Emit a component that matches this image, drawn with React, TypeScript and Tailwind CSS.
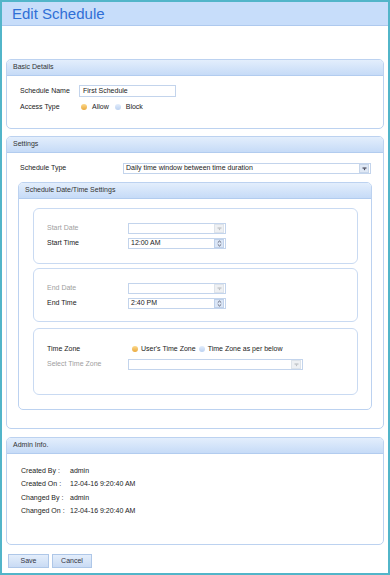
import React from "react";

const Panel = ({
  title,
  className = "",
  children,
}: {
  title: string;
  className?: string;
  children: React.ReactNode;
}) => (
  <div
    className={
      "rounded-[5px] border border-[#bcd2f0] bg-white overflow-hidden " +
      className
    }
  >
    <div className="h-[16px] flex items-center pl-[6px] bg-gradient-to-b from-[#e3eefc] to-[#c6dbf7] border-b border-[#b2ccef] text-[#333] text-[7px]">
      {title}
    </div>
    {children}
  </div>
);

const Arrow = ({ disabled = false }: { disabled?: boolean }) => (
  <div
    className={
      "w-[10px] h-[9px] mr-[1px] flex items-center justify-center border " +
      (disabled
        ? "bg-[#eef0f3] border-[#dde3ea]"
        : "bg-[#dfe8f5] border-[#c7d6ea]")
    }
  >
    <svg width="5" height="4" viewBox="0 0 5 4">
      <rect
        x="0.5"
        y="0.5"
        width="4"
        height="1"
        fill={disabled ? "#b5b9be" : "#334"}
      />
      <path d="M1.5 1.5h2L2.5 3.5z" fill={disabled ? "#b5b9be" : "#334"} />
    </svg>
  </div>
);

const SelectBox = ({
  width,
  value = "",
  disabled = false,
}: {
  width: string;
  value?: string;
  disabled?: boolean;
}) => (
  <div
    className={
      "h-[11px] border border-[#c3d4ec] bg-white flex items-center justify-between " +
      width
    }
  >
    <span className="pl-[2px] text-[#222]">{value}</span>
    <Arrow disabled={disabled} />
  </div>
);

const TimeBox = ({ value }: { value: string }) => (
  <div className="h-[11px] w-[98px] border border-[#c3d4ec] bg-white flex items-center justify-between">
    <span className="pl-[2px] text-[#222]">{value}</span>
    <div className="w-[10px] h-[9px] mr-[1px] flex items-center justify-center bg-[#dbe6f6] border border-[#bfd1ea]">
      <svg width="5" height="7" viewBox="0 0 5 7">
        <path d="M0.8 2.6L2.5 1L4.2 2.6" stroke="#445" strokeWidth="0.8" fill="none" />
        <path d="M0.8 4.4L2.5 6L4.2 4.4" stroke="#445" strokeWidth="0.8" fill="none" />
      </svg>
    </div>
  </div>
);

const Radio = ({ checked }: { checked: boolean }) => (
  <span
    className={
      "inline-block w-[6px] h-[6px] rounded-full " +
      (checked
        ? "bg-gradient-to-b from-[#fbd98a] to-[#eaa93a]"
        : "bg-gradient-to-b from-[#e3edfb] to-[#bcd2f1]")
    }
  />
);

export default function App() {
  return (
    <div className="h-[575px] w-[390px] border-2 border-[#52b5c9] bg-white font-['Liberation_Sans',Arial,sans-serif] text-[7px] text-[#222] flex flex-col">
      {/* Title bar */}
      <div className="h-[24px] shrink-0 bg-[#c7ddfa] border-b border-[#aec9ee] flex items-center pl-[10px]">
        <h1 className="text-[#2f6fd6] text-[15px] leading-none">Edit Schedule</h1>
      </div>

      <div className="pl-[4px] pr-[4px] pt-[33px] flex flex-col">
        {/* Basic Details */}
        <Panel title="Basic Details" className="h-[70px]">
          <div className="pl-[13px] pt-[9px] flex flex-col gap-[4px]">
            <div className="flex items-center h-[12px]">
              <span className="w-[59px]">Schedule Name</span>
              <div className="w-[97px] h-[12px] border border-[#c3d4ec] flex items-center pl-[3px]">
                First Schedule
              </div>
            </div>
            <div className="flex items-center h-[12px]">
              <span className="w-[61px]">Access Type</span>
              <Radio checked />
              <span className="ml-[5px]">Allow</span>
              <span className="ml-[6px] flex items-center">
                <Radio checked={false} />
                <span className="ml-[5px]">Block</span>
              </span>
            </div>
          </div>
        </Panel>

        {/* Settings */}
        <Panel title="Settings" className="mt-[7px] h-[293px]">
          <div className="pl-[13px] pt-[10px] flex items-center">
            <span className="w-[103px]">Schedule Type</span>
            <SelectBox width="w-[248px]" value="Daily time window between time duration" />
          </div>

          <div className="mx-[11px] mt-[8px]">
            <Panel title="Schedule Date/Time Settings" className="h-[228px]">
              <div className="pl-[14px] pr-[13px] pt-[9px] flex flex-col">
                <div className="h-[56px] border border-[#c9daf2] rounded-[6px] pl-[13px] pt-[14px] flex flex-col gap-[4px]">
                  <div className="flex items-center">
                    <span className="w-[81px] text-[#a0a0a0]">Start Date</span>
                    <SelectBox width="w-[98px]" disabled />
                  </div>
                  <div className="flex items-center">
                    <span className="w-[81px]">Start Time</span>
                    <TimeBox value="12:00 AM" />
                  </div>
                </div>

                <div className="mt-[4px] h-[54px] border border-[#c9daf2] rounded-[6px] pl-[13px] pt-[14px] flex flex-col gap-[4px]">
                  <div className="flex items-center">
                    <span className="w-[81px] text-[#a0a0a0]">End Date</span>
                    <SelectBox width="w-[98px]" disabled />
                  </div>
                  <div className="flex items-center">
                    <span className="w-[81px]">End Time</span>
                    <TimeBox value="2:40 PM" />
                  </div>
                </div>

                <div className="mt-[6px] h-[67px] border border-[#c9daf2] rounded-[6px] pl-[13px] pt-[15px] flex flex-col gap-[5px]">
                  <div className="flex items-center h-[10px]">
                    <span className="w-[85px]">Time Zone</span>
                    <Radio checked />
                    <span className="ml-[3px]">User's Time Zone</span>
                    <span className="ml-[3px] flex items-center">
                      <Radio checked={false} />
                      <span className="ml-[3px]">Time Zone as per below</span>
                    </span>
                  </div>
                  <div className="flex items-center">
                    <span className="w-[81px] text-[#a0a0a0]">Select Time Zone</span>
                    <SelectBox width="w-[175px]" disabled />
                  </div>
                </div>
              </div>
            </Panel>
          </div>
        </Panel>

        {/* Admin Info */}
        <Panel title="Admin Info." className="mt-[8px] h-[108px]">
          <div className="pl-[14px] pt-[12px] flex flex-col gap-[4px]">
            {[
              ["Created By :", "admin"],
              ["Created On :", "12-04-16 9:20:40 AM"],
              ["Changed By :", "admin"],
              ["Changed On :", "12-04-16 9:20:40 AM"],
            ].map(([k, v]) => (
              <div key={k} className="flex items-center h-[9.5px]">
                <span className="w-[49px]">{k}</span>
                <span>{v}</span>
              </div>
            ))}
          </div>
        </Panel>

        {/* Buttons */}
        <div className="mt-[9px] pl-[2px] flex gap-[3px]">
          <button className="w-[41px] h-[14px] border border-[#aec7e8] bg-gradient-to-b from-[#e4eefb] to-[#c9dbf4] text-[7px] text-[#334]">
            Save
          </button>
          <button className="w-[40px] h-[14px] border border-[#aec7e8] bg-gradient-to-b from-[#e4eefb] to-[#c9dbf4] text-[7px] text-[#334]">
            Cancel
          </button>
        </div>
      </div>
    </div>
  );
}
